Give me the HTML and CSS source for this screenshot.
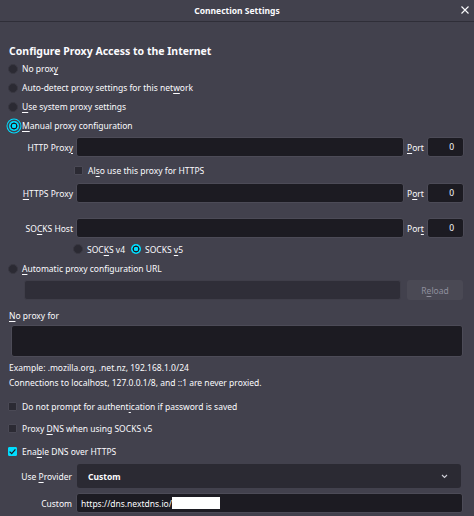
FILE: index.html
```html
<!DOCTYPE html>
<html lang="en">
<head>
  <meta charset="UTF-8">
  <title>Connection Settings</title>
  <link rel="stylesheet" href="styles.css">
</head>
<body>
  <!-- Dialog title bar -->
  <div class="titlebar">
    <span class="title">Connection Settings</span>
    <svg class="close" width="8" height="8" viewBox="0 0 8 8"><path d="M0.5 0.5 L7.5 7.5 M7.5 0.5 L0.5 7.5" stroke="#fbfbfe" stroke-width="1.1"/></svg>
  </div>

  <div class="content">
    <h1>Configure Proxy Access to the Internet</h1>

    <div class="radio-row"><span class="radio"></span><span>No prox<u>y</u></span></div>
    <div class="radio-row"><span class="radio"></span><span>Auto-detect proxy settings for this net<u>w</u>ork</span></div>
    <div class="radio-row"><span class="radio"></span><span><u>U</u>se system proxy settings</span></div>
    <div class="radio-row"><span class="radio checked focus"></span><span><u>M</u>anual proxy configuration</span></div>

    <!-- Manual proxy grid -->
    <div class="proxy-row first">
      <span class="field-label">HTTP Prox<u>y</u></span>
      <span class="input"></span>
      <span class="port-label"><u>P</u>ort</span>
      <span class="input port">0</span>
    </div>
    <div class="check-row indent"><span class="checkbox"></span><span>Al<u>s</u>o use this proxy for HTTPS</span></div>
    <div class="proxy-row https">
      <span class="field-label"><u>H</u>TTPS Proxy</span>
      <span class="input"></span>
      <span class="port-label">P<u>o</u>rt</span>
      <span class="input port">0</span>
    </div>
    <div class="proxy-row socks">
      <span class="field-label">SO<u>C</u>KS Host</span>
      <span class="input"></span>
      <span class="port-label">Por<u>t</u></span>
      <span class="input port">0</span>
    </div>
    <div class="socks-versions">
      <span class="small-radio"><span class="radio"></span><span>SOC<u>K</u>S v4</span></span>
      <span class="small-radio"><span class="radio checked"></span><span>SOCKS <u>v</u>5</span></span>
    </div>

    <div class="radio-row auto"><span class="radio"></span><span><u>A</u>utomatic proxy configuration URL</span></div>
    <div class="url-row">
      <span class="input url"></span>
      <span class="reload"><span>R<u>e</u>load</span></span>
    </div>

    <div class="label-line"><u>N</u>o proxy for</div>
    <div class="textarea"></div>
    <div class="hint first-hint">Example: .mozilla.org, .net.nz, 192.168.1.0/24</div>
    <div class="hint">Connections to localhost, 127.0.0.1/8, and ::1 are never proxied.</div>

    <div class="check-row opt first-opt"><span class="checkbox"></span><span>Do not prompt for authent<u>i</u>cation if password is saved</span></div>
    <div class="check-row opt"><span class="checkbox"></span><span>Proxy <u>D</u>NS when using SOCKS v5</span></div>
    <div class="check-row opt doh"><span class="checkbox checked"></span><span>Ena<u>b</u>le DNS over HTTPS</span></div>

    <div class="doh-row provider">
      <span class="doh-label">Use <u>P</u>rovider</span>
      <span class="select"><span>Custom</span>
        <svg class="chevron" width="7" height="5" viewBox="0 0 7 5"><path d="M1 1 L3.5 3.5 L6 1" fill="none" stroke="#cfcfd8" stroke-width="1.1"/></svg>
      </span>
    </div>
    <div class="doh-row custom">
      <span class="doh-label">Custom</span>
      <span class="input doh-url"><span>https://dns.nextdns.io/</span><span class="redact"></span></span>
    </div>
  </div>
</body>
</html>
```

FILE: styles.css
```css
body { margin: 0; background: #42414d; color: #fbfbfe; font-family: "Noto Sans", "Open Sans", sans-serif; font-size: 8.5px; overflow: hidden; }
u { text-decoration-thickness: 0.8px; text-underline-offset: 1.5px; }

.titlebar { height: 21px; border-bottom: 1px solid #2f2e38; display: flex; align-items: center; justify-content: center; position: relative; }
.title { font-weight: bold; font-size: 8.5px; }
.close { position: absolute; right: 5px; top: 6px; }

.content { padding: 0 11px 0 8px; }
h1 { font-size: 10.5px; font-weight: bold; margin: 21px 0 0 1px; line-height: 16px; }

.radio-row { display: flex; align-items: center; height: 19px; }
.radio { width: 10px; height: 10px; border-radius: 50%; background: #2b2a33; box-sizing: border-box; border: 1px solid #393842; margin-right: 4px; flex: none; }
.radio.checked { border: none; background: radial-gradient(circle, #00ddff 0 2px, #1c1b22 2.4px 3.3px, #00ddff 3.7px); }
.radio.focus { width: 10px; height: 10px; box-shadow: 0 0 0 1.5px #42414d, 0 0 0 2.5px #00ddff; margin-left: 1px; margin-right: 3px; }

.proxy-row { display: grid; grid-template-columns: 65px 1fr 17px 37px; column-gap: 3px; align-items: center; height: 20px; margin-right: -1px; }
.proxy-row.first { margin-top: 2px; }
.proxy-row.https { margin-top: 6px; }
.proxy-row.socks { margin-top: 15px; }
.field-label { text-align: right; }
.port-label { text-align: left; }

.input { display: block; height: 20px; box-sizing: border-box; background: #1c1b22; border: 1px solid #4c4b57; border-radius: 3px; }
.input.port { text-align: right; padding-right: 9px; line-height: 18px; }

.check-row { display: flex; align-items: center; height: 14px; }
.check-row.indent { margin: 6px 0 0 66px; }
.checkbox { width: 9px; height: 9px; box-sizing: border-box; background: #2b2a33; border: 1px solid #4a4955; border-radius: 1px; margin-right: 5px; flex: none; }
.checkbox.checked { background: #00ddff url("data:image/svg+xml;utf8,<svg xmlns='http://www.w3.org/2000/svg' viewBox='0 0 9 9'><path d='M1.6 4.6 L3.7 6.6 L7.4 2.4' fill='none' stroke='%231c1b22' stroke-width='1.3'/></svg>") center / 9px 9px no-repeat; border-color: #00ddff; }

.socks-versions { display: flex; gap: 6px; margin: 4px 0 0 65px; height: 14px; align-items: center; }
.small-radio { display: flex; align-items: center; }

.radio-row.auto { margin-top: 3px; }
.url-row { display: flex; gap: 6px; margin: 2px 0 0 16px; }
.input.url { flex: 1; background: #2f2e38; border-color: #3f3e49; }
.reload { width: 56px; height: 20px; background: #4a4954; border-radius: 3px; color: #8f8f9d; display: flex; align-items: center; justify-content: center; }

.label-line { margin: 8px 0 0 1px; line-height: 16px; }
.textarea { height: 32px; margin: 1px 0 0 3px; box-sizing: border-box; background: #1c1b22; border: 1px solid #4c4b57; border-radius: 3px; }
.hint { line-height: 15px; margin-left: 1px; }
.hint.first-hint { margin-top: 3px; }

.check-row.opt { height: 19px; margin-top: 3px; }
.check-row.first-opt { margin-top: 7px; }
.check-row.doh { margin-top: 4px; }

.doh-row { display: flex; align-items: center; }
.doh-label { width: 64px; text-align: right; flex: none; }
.provider { margin-top: 3px; margin-right: 2px; }
.select { flex: 1; margin-left: 5px; height: 24px; background: #2b2a33; border-radius: 3px; display: flex; align-items: center; padding-left: 11px; font-weight: bold; position: relative; }
.chevron { position: absolute; right: 13px; top: 10px; }
.custom { margin-top: 5px; }
.input.doh-url { flex: 1; margin-left: 4px; display: flex; align-items: center; padding-left: 4px; }
.redact { display: inline-block; width: 48px; height: 12px; background: #ffffff; }
```
